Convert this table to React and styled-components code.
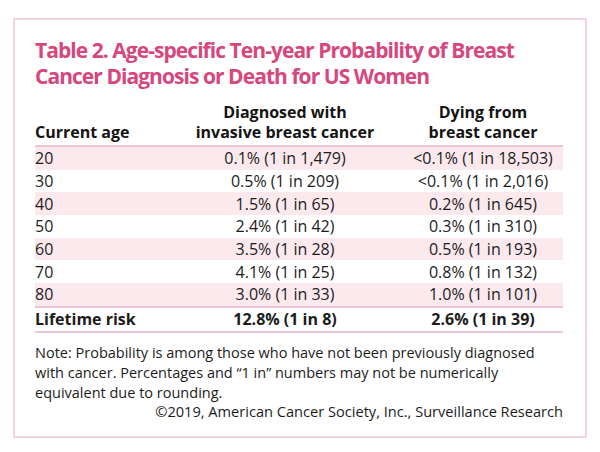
import React from 'react';
import styled, { createGlobalStyle } from 'styled-components';

const GlobalStyle = createGlobalStyle`
  body {
    margin: 0;
    background: #ffffff;
    font-family: 'Open Sans', 'Noto Sans', sans-serif;
    color: #1c1c1c;
  }
`;

const rows = [
  { age: '20', diagnosed: '0.1% (1 in 1,479)', dying: '<0.1% (1 in 18,503)' },
  { age: '30', diagnosed: '0.5% (1 in 209)', dying: '<0.1% (1 in 2,016)' },
  { age: '40', diagnosed: '1.5% (1 in 65)', dying: '0.2% (1 in 645)' },
  { age: '50', diagnosed: '2.4% (1 in 42)', dying: '0.3% (1 in 310)' },
  { age: '60', diagnosed: '3.5% (1 in 28)', dying: '0.5% (1 in 193)' },
  { age: '70', diagnosed: '4.1% (1 in 25)', dying: '0.8% (1 in 132)' },
  { age: '80', diagnosed: '3.0% (1 in 33)', dying: '1.0% (1 in 101)' },
];

const App = () => {
  return (
    <>
      <GlobalStyle />
      <Page>
        <Card>
          <Title>
            Table 2. Age-specific Ten-year Probability of Breast
            <br />
            Cancer Diagnosis or Death for US Women
          </Title>
          <Table>
            <HeaderRow>
              <HeadCell>Current age</HeadCell>
              <HeadCell center>
                Diagnosed with
                <br />
                invasive breast cancer
              </HeadCell>
              <HeadCell center>
                Dying from
                <br />
                breast cancer
              </HeadCell>
            </HeaderRow>
            {rows.map((row, i) => (
              <Row key={row.age} shaded={i % 2 === 0}>
                <Cell>{row.age}</Cell>
                <Cell center>{row.diagnosed}</Cell>
                <Cell center>{row.dying}</Cell>
              </Row>
            ))}
            <TotalRow>
              <Cell>Lifetime risk</Cell>
              <Cell center>12.8% (1 in 8)</Cell>
              <Cell center>2.6% (1 in 39)</Cell>
            </TotalRow>
          </Table>
          <Note>
            Note: Probability is among those who have not been previously diagnosed
            <br />
            with cancer. Percentages and “1 in” numbers may not be numerically
            <br />
            equivalent due to rounding.
          </Note>
          <Source>©2019, American Cancer Society, Inc., Surveillance Research</Source>
        </Card>
      </Page>
    </>
  );
};

const Page = styled.div`
  padding: 18px 0 0 13px;
`;

const Card = styled.div`
  box-sizing: border-box;
  width: 574px;
  height: 420px;
  border: 2px solid #f0d3dd;
  padding: 17px 22px 0 20px;
`;

const Title = styled.h2`
  margin: 0 0 13px;
  font-size: 21px;
  line-height: 26px;
  font-weight: 700;
  color: #d6487d;
  letter-spacing: -0.95px;
  white-space: nowrap;
`;

const Table = styled.div`
  display: flex;
  flex-direction: column;
  width: 528px;
`;

const Columns = styled.div`
  display: grid;
  grid-template-columns: 150px 200px 1fr;
`;

const HeaderRow = styled(Columns)`
  align-items: end;
  padding-bottom: 3px;
  border-bottom: 2px solid #ecc6d3;
`;

const HeadCell = styled.div`
  font-size: 16px;
  line-height: 20px;
  font-weight: 700;
  color: #141414;
  white-space: nowrap;
  text-align: ${(p) => (p.center ? 'center' : 'left')};

  &:nth-child(3) {
    padding-left: 18px;
  }
`;

const Row = styled(Columns)`
  height: 22.7px;
  align-items: center;
  background: ${(p) => (p.shaded ? '#fbe9ee' : '#ffffff')};
`;

const TotalRow = styled(Row)`
  font-weight: 700;
  border-top: 2px solid #ecc6d3;
  border-bottom: 2px solid #ecc6d3;
  box-sizing: content-box;
`;

const Cell = styled.div`
  font-size: 16px;
  line-height: 20px;
  white-space: nowrap;
  text-align: ${(p) => (p.center ? 'center' : 'left')};

  &:nth-child(3) {
    padding-left: 18px;
  }
`;

const Note = styled.p`
  margin: 10px 0 0;
  font-size: 14.5px;
  line-height: 20px;
  color: #1c1c1c;
  white-space: nowrap;
`;

const Source = styled.p`
  margin: -1px 0 0;
  width: 528px;
  text-align: right;
  font-size: 14.6px;
  line-height: 18px;
  color: #1c1c1c;
  white-space: nowrap;
`;

export default App;
